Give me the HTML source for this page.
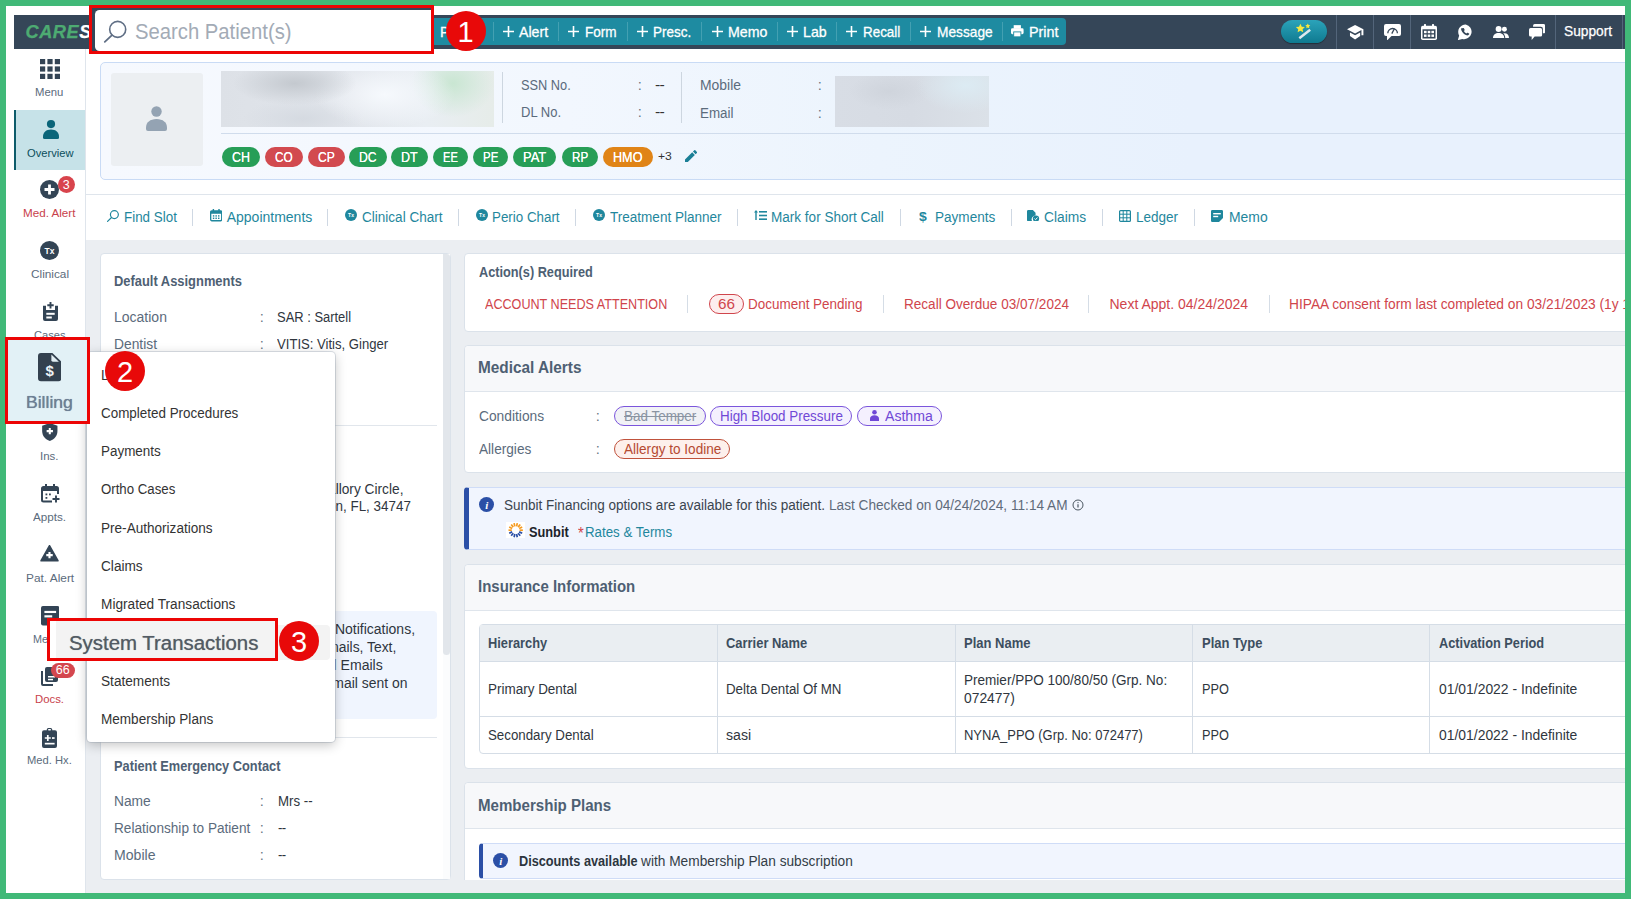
<!DOCTYPE html>
<html lang="en"><head><meta charset="utf-8"><title>CareStack - Patient Overview</title>
<style>
*{box-sizing:border-box;margin:0;padding:0}
html,body{width:1631px;height:899px;overflow:hidden;background:#41b978;font-family:"Liberation Sans",sans-serif;}
#white{position:absolute;left:6px;top:6px;width:1619px;height:887px;background:#fff;overflow:hidden}
#app{position:absolute;left:-6px;top:-6px;width:1631px;height:899px}
#ann{position:absolute;left:0;top:0;width:1631px;height:899px;overflow:hidden}
#app div,#app span,#app svg,#ann div,#ann span,#ann svg{position:absolute}
.t{white-space:nowrap;line-height:1}
.t b{position:static!important;font-weight:700}
.t span{position:static!important}
.sep{width:1px;background:#cfd8e3}
.pill{border-radius:10px;height:20px}
.panel{background:#fff;border:1px solid #dbe2ea;border-radius:4px}
.phead{background:#f7f8fa;border-bottom:1px solid #dfe5ec;border-radius:4px 4px 0 0;left:0;top:0;right:0}
.num{border-radius:50%;background:#e80909;width:40px;height:40px}
.redbox{border:3px solid #ec0505}
</style></head>
<body>
<div id="white"><div id="app">
<div style="left:14px;top:15px;width:1611px;height:34px;background:#354658"></div>
<span class="t" style="left:25.5px;top:22.7px;font-size:18.2px;font-weight:700;font-style:italic;color:#4dab72;letter-spacing:0.55px;-webkit-text-stroke:0.25px currentColor">CARE<span style="color:#fff">S</span></span>
<div style="left:380px;top:18px;width:686px;height:27px;background:#1e8ba1;border-radius:0 4px 4px 0"></div>
<div class="sep" style="left:492.5px;top:22.0px;height:19.0px;background:#43a0b2"></div>
<div class="sep" style="left:558.2px;top:22.0px;height:19.0px;background:#43a0b2"></div>
<div class="sep" style="left:626.5px;top:22.0px;height:19.0px;background:#43a0b2"></div>
<div class="sep" style="left:701.4px;top:22.0px;height:19.0px;background:#43a0b2"></div>
<div class="sep" style="left:777.3px;top:22.0px;height:19.0px;background:#43a0b2"></div>
<div class="sep" style="left:835.9px;top:22.0px;height:19.0px;background:#43a0b2"></div>
<div class="sep" style="left:909.9px;top:22.0px;height:19.0px;background:#43a0b2"></div>
<div class="sep" style="left:1002.3px;top:22.0px;height:19.0px;background:#43a0b2"></div>
<span class="t" style="left:439.5px;top:23.8px;font-size:15px;color:#fff;transform:scaleX(0.954);transform-origin:0 0;-webkit-text-stroke:0.3px #fff;">P</span>
<svg style="left:502.6px;top:25.5px" width="11" height="11" viewBox="0 0 11 11"><path d="M5.5 0V11 M0 5.5H11" stroke="#fff" stroke-width="1.6" fill="none"/></svg>
<span class="t" style="left:519.1px;top:23.8px;font-size:15px;color:#fff;transform:scaleX(0.945);transform-origin:0 0;-webkit-text-stroke:0.3px #fff;">Alert</span>
<svg style="left:568.2px;top:25.5px" width="11" height="11" viewBox="0 0 11 11"><path d="M5.5 0V11 M0 5.5H11" stroke="#fff" stroke-width="1.6" fill="none"/></svg>
<span class="t" style="left:584.7px;top:23.8px;font-size:15px;color:#fff;transform:scaleX(0.904);transform-origin:0 0;-webkit-text-stroke:0.3px #fff;">Form</span>
<svg style="left:636.5px;top:25.5px" width="11" height="11" viewBox="0 0 11 11"><path d="M5.5 0V11 M0 5.5H11" stroke="#fff" stroke-width="1.6" fill="none"/></svg>
<span class="t" style="left:652.8px;top:23.8px;font-size:15px;color:#fff;transform:scaleX(0.897);transform-origin:0 0;-webkit-text-stroke:0.3px #fff;">Presc.</span>
<svg style="left:711.6px;top:25.5px" width="11" height="11" viewBox="0 0 11 11"><path d="M5.5 0V11 M0 5.5H11" stroke="#fff" stroke-width="1.6" fill="none"/></svg>
<span class="t" style="left:727.9px;top:23.8px;font-size:15px;color:#fff;transform:scaleX(0.944);transform-origin:0 0;-webkit-text-stroke:0.3px #fff;">Memo</span>
<svg style="left:787.4px;top:25.5px" width="11" height="11" viewBox="0 0 11 11"><path d="M5.5 0V11 M0 5.5H11" stroke="#fff" stroke-width="1.6" fill="none"/></svg>
<span class="t" style="left:803.4px;top:23.8px;font-size:15px;color:#fff;transform:scaleX(0.945);transform-origin:0 0;-webkit-text-stroke:0.3px #fff;">Lab</span>
<svg style="left:845.8px;top:25.5px" width="11" height="11" viewBox="0 0 11 11"><path d="M5.5 0V11 M0 5.5H11" stroke="#fff" stroke-width="1.6" fill="none"/></svg>
<span class="t" style="left:862.9px;top:23.8px;font-size:15px;color:#fff;transform:scaleX(0.894);transform-origin:0 0;-webkit-text-stroke:0.3px #fff;">Recall</span>
<svg style="left:919.7px;top:25.5px" width="11" height="11" viewBox="0 0 11 11"><path d="M5.5 0V11 M0 5.5H11" stroke="#fff" stroke-width="1.6" fill="none"/></svg>
<span class="t" style="left:936.9px;top:23.8px;font-size:15px;color:#fff;transform:scaleX(0.914);transform-origin:0 0;-webkit-text-stroke:0.3px #fff;">Message</span>
<svg style="left:1011.300px;top:24.600px" width="12.600" height="12" viewBox="0 0 14 13"><rect x="3" y="0" width="8" height="4" fill="#fff"/><rect x="0" y="3.5" width="14" height="6.5" rx="1.5" fill="#fff"/><rect x="3" y="7.5" width="8" height="5.5" fill="#fff" stroke="#1e8ba1" stroke-width="1"/></svg>
<span class="t" style="left:1028.5px;top:23.8px;font-size:15px;color:#fff;transform:scaleX(0.955);transform-origin:0 0;-webkit-text-stroke:0.3px #fff;">Print</span>
<div class="sep" style="left:1336.0px;top:15.0px;height:34.0px;background:#53657a"></div>
<div class="sep" style="left:1373.0px;top:15.0px;height:34.0px;background:#53657a"></div>
<div class="sep" style="left:1410.0px;top:15.0px;height:34.0px;background:#53657a"></div>
<div class="sep" style="left:1555.0px;top:15.0px;height:34.0px;background:#53657a"></div>
<div class="sep" style="left:1622.0px;top:15.0px;height:34.0px;background:#53657a"></div>
<div style="left:1281px;top:20px;width:46px;height:23px;border-radius:12px;background:linear-gradient(#2ba3ba,#0f7a90);box-shadow:0 1px 1px rgba(0,0,0,.35)"></div>
<svg style="left:1295px;top:22px" width="20" height="19" viewBox="0 0 20 19"><path d="M4.300 16.300L15.200 7.800" stroke="#dfe8ee" stroke-width="2.500"/><path d="M5.400 1.800l1.400 2.900 3.100.4-2.300 2.100.6 3.100-2.800-1.500-2.800 1.500.6-3.100L.9 5.100l3.100-.4z" fill="#f7e83e"/><path d="M12.800 1.500l.8 1.600 1.700.2-1.300 1.200.3 1.700-1.500-.8-1.500.8.300-1.700-1.300-1.200 1.700-.2z" fill="#f7e83e"/></svg>
<svg style="left:1346.500px;top:24.500px" width="17" height="15" viewBox="0 0 20 17.600"><path d="M9.500 0L0 5l9.500 5 7.500-4v6h2.300V5z" fill="#fff"/><path d="M3.500 8.800v4.200L9.500 17l6-4V8.800L9.500 12z" fill="#fff"/></svg>
<svg style="left:1383.500px;top:23.700px" width="17" height="16.500" viewBox="0 0 17 16.500"><path d="M2 0h13a2 2 0 0 1 2 2v8a2 2 0 0 1-2 2H7.500L3 16.500V12H2a2 2 0 0 1-2-2V2a2 2 0 0 1 2-2z" fill="#fff"/><path d="M3.800 9.300a4.800 4.800 0 0 1 9.600 0" fill="none" stroke="#354658" stroke-width="1.300"/><path d="M7.800 9.600l2.600-4.800" stroke="#354658" stroke-width="1.300"/></svg>
<svg style="left:1421px;top:23.800px" width="16" height="16" viewBox="0 0 16 16"><rect x="0" y="1.800" width="16" height="14.200" rx="1.800" fill="#fff"/><rect x="3" y="0" width="2" height="3" rx=".5" fill="#fff"/><rect x="11" y="0" width="2" height="3" rx=".5" fill="#fff"/><rect x="1.500" y="5.300" width="13" height="9.200" fill="#354658"/><g fill="#fff"><rect x="3" y="6.800" width="2.600" height="2.400"/><rect x="6.700" y="6.800" width="2.600" height="2.400"/><rect x="10.400" y="6.800" width="2.600" height="2.400"/><rect x="3" y="10.500" width="2.600" height="2.400"/><rect x="6.700" y="10.500" width="2.600" height="2.400"/><rect x="10.400" y="10.500" width="2.600" height="2.400"/></g></svg>
<svg style="left:1456.500px;top:23.800px" width="16.600" height="16.600" viewBox="0 0 20 20"><path d="M10.500 0.500a9 9 0 0 0-7.900 13.400L1 19.500l5.300-1.500A9 9 0 1 0 10.500 .5z" fill="#fff"/><path d="M7.300 5.100c.3-.3.800-.3 1 .1l.9 1.700c.1.300 0 .6-.2.800l-.6.600c.5 1.300 1.700 2.500 3 3l.6-.6c.2-.2.600-.3.800-.2l1.700.9c.4.2.4.7.1 1l-.8.8c-.6.600-1.500.7-2.300.4-3-1.100-5.300-3.400-6.400-6.400-.3-.8-.2-1.700.4-2.300z" fill="#354658"/></svg>
<svg style="left:1493px;top:25.800px" width="16" height="12" viewBox="0 0 20 15"><circle cx="7" cy="3.700" r="3.700" fill="#fff"/><path d="M0 15c0-4.200 3-6.300 7-6.300s7 2.100 7 6.300z" fill="#fff"/><circle cx="14.300" cy="4" r="3.100" fill="#fff"/><path d="M15.300 15H20c0-3.800-2.200-5.800-5.700-5.800-.5 0-1 .05-1.400.15 1.500 1.200 2.400 3.200 2.400 5.650z" fill="#fff"/></svg>
<svg style="left:1528.800px;top:23.800px" width="16.200" height="16" viewBox="0 0 20 19.700"><path d="M7 0h11a2 2 0 0 1 2 2v7.500a2 2 0 0 1-2 2h-.8V6a2.500 2.500 0 0 0-2.500-2.500H5V2a2 2 0 0 1 2-2z" fill="#fff"/><path d="M2 5h12.200a2 2 0 0 1 2 2v6.500a2 2 0 0 1-2 2H7l-3.700 4.200V15.500H2a2 2 0 0 1-2-2V7a2 2 0 0 1 2-2z" fill="#fff"/></svg>
<span class="t" style="left:1564.3px;top:24.1px;font-size:14px;color:#fff;transform:scaleX(0.982);transform-origin:0 0;-webkit-text-stroke:0.25px #fff;">Support</span>
<div style="left:85px;top:49px;width:1px;height:844px;background:#dfe5ec"></div>
<svg style="left:39.900px;top:58.600px" width="20" height="20" viewBox="0 0 20 20" fill="#334455"><rect x="0.0" y="0.0" width="5.2" height="5.2"/><rect x="7.4" y="0.0" width="5.2" height="5.2"/><rect x="14.8" y="0.0" width="5.2" height="5.2"/><rect x="0.0" y="7.4" width="5.2" height="5.2"/><rect x="7.4" y="7.4" width="5.2" height="5.2"/><rect x="14.8" y="7.4" width="5.2" height="5.2"/><rect x="0.0" y="14.8" width="5.2" height="5.2"/><rect x="7.4" y="14.8" width="5.2" height="5.2"/><rect x="14.8" y="14.8" width="5.2" height="5.2"/></svg>
<span class="t" style="left:35.4px;top:87.0px;font-size:11px;color:#5b6b7c;transform:scaleX(1.027);transform-origin:0 0;">Menu</span>
<div style="left:14px;top:110px;width:71px;height:60px;background:#c6e2e8;border-left:2px solid #0e5c6b"></div>
<svg style="left:42.700px;top:119.700px" width="16" height="19" viewBox="0 0 16 19" fill="#0a6579"><circle cx="8" cy="4.100" r="4.100"/><path d="M0 17.500v-1c0-4.200 3.200-7 8-7s8 2.800 8 7v1a1.500 1.500 0 0 1-1.500 1.500h-13A1.500 1.500 0 0 1 0 17.500z"/></svg>
<span class="t" style="left:27.1px;top:147.8px;font-size:11px;color:#0b4f5c;transform:scaleX(1.016);transform-origin:0 0;">Overview</span>
<svg style="left:40px;top:180px" width="19" height="19" viewBox="0 0 19 19"><circle cx="9.500" cy="9.500" r="9.500" fill="#334455"/><path d="M9.500 4.500v10M4.500 9.500h10" stroke="#fff" stroke-width="2.800"/></svg>
<div style="left:58px;top:176px;width:17px;height:17px;border-radius:50%;background:#d8444c"></div>
<span class="t" style="left:62.8px;top:178.7px;font-size:12.5px;color:#fff;">3</span>
<span class="t" style="left:22.9px;top:207.9px;font-size:11px;color:#c8414b;transform:scaleX(1.059);transform-origin:0 0;">Med. Alert</span>
<svg style="left:40.300px;top:241px" width="19" height="19" viewBox="0 0 19 19"><circle cx="9.500" cy="9.500" r="9.500" fill="#334455"/><text x="9.500" y="12.500" font-size="8.500" font-weight="700" fill="#fff" text-anchor="middle" font-family="Liberation Sans, sans-serif">Tx</text></svg>
<span class="t" style="left:30.6px;top:269.1px;font-size:11px;color:#5b6b7c;transform:scaleX(1.073);transform-origin:0 0;">Clinical</span>
<svg style="left:42.500px;top:302px" width="15" height="19" viewBox="0 0 15 19"><path d="M7.500 0v6.500M4.300 3.200h6.400" stroke="#334455" stroke-width="1.900"/><path d="M0 3.800h3v4.200h9V3.800h3V17a2 2 0 0 1-2 2H2a2 2 0 0 1-2-2z" fill="#334455"/><rect x="3.300" y="10.800" width="8.400" height="2" fill="#fff"/><rect x="3.300" y="14.500" width="5.500" height="2" fill="#fff"/></svg>
<span class="t" style="left:33.9px;top:329.7px;font-size:11px;color:#5b6b7c;transform:scaleX(1.009);transform-origin:0 0;">Cases</span>
<svg style="left:42.200px;top:423.400px" width="15.600" height="18" viewBox="0 0 17 20"><path d="M8.500 0L17 3v6c0 5.500-3.600 9.500-8.500 11C3.600 18.500 0 14.500 0 9V3z" fill="#334455"/><path d="M8.500 5.500v7M5 9h7" stroke="#fff" stroke-width="2.300"/></svg>
<span class="t" style="left:40.3px;top:450.9px;font-size:11px;color:#5b6b7c;transform:scaleX(1.041);transform-origin:0 0;">Ins.</span>
<svg style="left:40.500px;top:484px" width="19" height="19" viewBox="0 0 19 19"><path d="M11 17.500H2.500A1.500 1.500 0 0 1 1 16V4.500A1.500 1.500 0 0 1 2.500 3h13A1.500 1.500 0 0 1 17 4.500V10" fill="none" stroke="#334455" stroke-width="2"/><rect x="1" y="3" width="16" height="4" fill="#334455"/><rect x="4" y="0" width="2" height="4.500" fill="#334455"/><rect x="12" y="0" width="2" height="4.500" fill="#334455"/><g fill="#334455"><rect x="4.500" y="9.500" width="1.800" height="1.800"/><rect x="8" y="9.500" width="1.800" height="1.800"/><rect x="4.500" y="13" width="1.800" height="1.800"/></g><path d="M15 11.500v7M11.500 15h7" stroke="#334455" stroke-width="1.900"/></svg>
<span class="t" style="left:33.0px;top:511.6px;font-size:11px;color:#5b6b7c;transform:scaleX(1.060);transform-origin:0 0;">Appts.</span>
<svg style="left:40.200px;top:545.300px" width="19" height="16.600" viewBox="0 0 20 18"><path d="M10 1l9 16H1z" fill="#334455" stroke="#334455" stroke-width="2" stroke-linejoin="round"/><path d="M10 7.500v7M6.500 11h7" stroke="#fff" stroke-width="2.300"/></svg>
<span class="t" style="left:25.6px;top:572.7px;font-size:11px;color:#5b6b7c;transform:scaleX(1.079);transform-origin:0 0;">Pat. Alert</span>
<svg style="left:40.500px;top:606px" width="18.500" height="19.500" viewBox="0 0 19 20"><path d="M2 0h15a2 2 0 0 1 2 2v11l-6 7H2a2 2 0 0 1-2-2V2a2 2 0 0 1 2-2z" fill="#334455"/><rect x="3.500" y="5" width="12" height="2.200" fill="#fff"/><rect x="3.500" y="9.500" width="8" height="2.200" fill="#fff"/></svg>
<span class="t" style="left:32.9px;top:634.0px;font-size:11px;color:#5b6b7c;transform:scaleX(0.981);transform-origin:0 0;">Memo</span>
<svg style="left:41px;top:667px" width="17" height="19" viewBox="0 0 17 19"><path d="M0 4h2v13h10v2H2a2 2 0 0 1-2-2z" fill="#334455"/><path d="M6 0h9a2 2 0 0 1 2 2v11a2 2 0 0 1-2 2H6a2 2 0 0 1-2-2V2a2 2 0 0 1 2-2z" fill="#334455"/><rect x="7" y="9" width="7" height="1.500" fill="#fff"/><rect x="7" y="11.800" width="5" height="1.500" fill="#fff"/></svg>
<div style="left:50.800px;top:662.500px;width:24px;height:15.500px;border-radius:8px;background:#d4464e"></div>
<span class="t" style="left:55.8px;top:664.4px;font-size:12.5px;color:#fff;">66</span>
<span class="t" style="left:35.0px;top:694.1px;font-size:11px;color:#c8414b;transform:scaleX(1.030);transform-origin:0 0;">Docs.</span>
<svg style="left:42.200px;top:728px" width="15" height="20" viewBox="0 0 15 20"><rect x="4.800" y="0" width="5.400" height="4" rx="1.500" fill="#334455"/><path d="M2 2.300h11a2 2 0 0 1 2 2V18a2 2 0 0 1-2 2H2a2 2 0 0 1-2-2V4.300a2 2 0 0 1 2-2z" fill="#334455"/><path d="M5.800 7v6M2.800 10h6" stroke="#fff" stroke-width="1.700"/><rect x="10" y="9.200" width="2.600" height="1.700" fill="#fff"/><rect x="2.800" y="14.800" width="9.800" height="1.700" fill="#fff"/><rect x="6" y="0.900" width="3" height="1.600" rx=".8" fill="#fff"/></svg>
<span class="t" style="left:27.1px;top:754.9px;font-size:11px;color:#5b6b7c;transform:scaleX(1.017);transform-origin:0 0;">Med. Hx.</span>
<div style="left:100px;top:62px;width:1560px;height:118px;border:1px solid #c9dbf5;border-radius:5px;background:linear-gradient(90deg,#f6f9fe 0,#f2f7fe 30%,#ecf4fd 50%,#e8f1fd 70%,#e8f1fd 100%)"></div>
<div style="left:111px;top:73px;width:92px;height:93px;background:#eceff2;border-radius:3px"></div>
<svg style="left:146px;top:106px" width="21" height="25" viewBox="0 0 21 25" fill="#94a3b3"><circle cx="10.500" cy="5.500" r="5.200"/><path d="M0 23v-1.500c0-5 4-8.500 10.500-8.500S21 16.500 21 21.500V23a2 2 0 0 1-2 2H2a2 2 0 0 1-2-2z"/></svg>
<div style="left:221px;top:71px;width:273px;height:56px;overflow:hidden;background:radial-gradient(ellipse 62px 22px at 27% 22%,#c4c9cf 0,rgba(196,201,207,0) 100%),radial-gradient(ellipse 70px 34px at 60% 42%,#f6f9fd 0,rgba(246,249,253,0) 100%),radial-gradient(ellipse 42px 34px at 85% 22%,#c9e6d2 0,rgba(201,230,210,0) 100%),radial-gradient(ellipse 60px 20px at 30% 85%,#d5dae1 0,rgba(213,218,225,0) 100%),linear-gradient(90deg,#dde1e7 0,#e2e6ec 50%,#e9eef3 75%,#e6ece9 100%)"></div>
<div style="left:221px;top:133px;width:1410px;height:1px;background:#d0dcec"></div>
<div class="sep" style="left:502.0px;top:72.0px;height:51.0px;background:#cdd6e0"></div>
<div class="sep" style="left:681.0px;top:72.0px;height:51.0px;background:#cdd6e0"></div>
<span class="t" style="left:520.9px;top:78.3px;font-size:14px;color:#5b6b7c;transform:scaleX(0.914);transform-origin:0 0;">SSN No.</span>
<span class="t" style="left:638.0px;top:78.3px;font-size:14px;color:#5b6b7c;transform:scaleX(0.930);transform-origin:0 0;">:</span>
<span class="t" style="left:654.8px;top:78.3px;font-size:14px;color:#333;transform:scaleX(1.130);transform-origin:0 0;letter-spacing:-0.6px;">--</span>
<span class="t" style="left:520.9px;top:105.3px;font-size:14px;color:#5b6b7c;transform:scaleX(0.931);transform-origin:0 0;">DL No.</span>
<span class="t" style="left:638.0px;top:105.3px;font-size:14px;color:#5b6b7c;transform:scaleX(0.930);transform-origin:0 0;">:</span>
<span class="t" style="left:654.8px;top:105.3px;font-size:14px;color:#333;transform:scaleX(1.130);transform-origin:0 0;letter-spacing:-0.6px;">--</span>
<span class="t" style="left:700.4px;top:78.3px;font-size:14px;color:#5b6b7c;transform:scaleX(0.993);transform-origin:0 0;">Mobile</span>
<span class="t" style="left:817.5px;top:78.3px;font-size:14px;color:#5b6b7c;transform:scaleX(0.930);transform-origin:0 0;">:</span>
<span class="t" style="left:700.4px;top:105.9px;font-size:14px;color:#5b6b7c;transform:scaleX(0.956);transform-origin:0 0;">Email</span>
<span class="t" style="left:817.5px;top:105.8px;font-size:14px;color:#5b6b7c;transform:scaleX(0.930);transform-origin:0 0;">:</span>
<div style="left:835px;top:76px;width:154px;height:51px;background:radial-gradient(ellipse 50px 28px at 85% 18%,#dcebf3 0,rgba(220,235,243,0) 100%),radial-gradient(ellipse 40px 18px at 35% 30%,#cfd4dc 0,rgba(207,212,220,0) 100%),linear-gradient(90deg,#d8dde5 0,#d6dbe3 50%,#dbe1e8 100%)"></div>
<div class="pill" style="left:221.8px;top:147px;width:38.0px;background:#279e57"></div>
<span class="t" style="left:231.8px;top:150.1px;font-size:14px;color:#fff;transform:scaleX(0.889);transform-origin:0 0;text-shadow:0 0 0.4px #fff;">CH</span>
<div class="pill" style="left:265.0px;top:147px;width:37.7px;background:#d24a4f"></div>
<span class="t" style="left:275.0px;top:150.1px;font-size:14px;color:#fff;transform:scaleX(0.842);transform-origin:0 0;text-shadow:0 0 0.4px #fff;">CO</span>
<div class="pill" style="left:308.0px;top:147px;width:36.9px;background:#d24a4f"></div>
<span class="t" style="left:318.0px;top:150.1px;font-size:14px;color:#fff;transform:scaleX(0.868);transform-origin:0 0;text-shadow:0 0 0.4px #fff;">CP</span>
<div class="pill" style="left:349.0px;top:147px;width:37.6px;background:#279e57"></div>
<span class="t" style="left:359.0px;top:150.1px;font-size:14px;color:#fff;transform:scaleX(0.869);transform-origin:0 0;text-shadow:0 0 0.4px #fff;">DC</span>
<div class="pill" style="left:391.0px;top:147px;width:36.7px;background:#279e57"></div>
<span class="t" style="left:401.0px;top:150.1px;font-size:14px;color:#fff;transform:scaleX(0.893);transform-origin:0 0;text-shadow:0 0 0.4px #fff;">DT</span>
<div class="pill" style="left:433.0px;top:147px;width:34.8px;background:#279e57"></div>
<span class="t" style="left:443.0px;top:150.1px;font-size:14px;color:#fff;transform:scaleX(0.791);transform-origin:0 0;text-shadow:0 0 0.4px #fff;">EE</span>
<div class="pill" style="left:473.1px;top:147px;width:35.3px;background:#279e57"></div>
<span class="t" style="left:483.1px;top:150.1px;font-size:14px;color:#fff;transform:scaleX(0.818);transform-origin:0 0;text-shadow:0 0 0.4px #fff;">PE</span>
<div class="pill" style="left:513.1px;top:147px;width:43.3px;background:#279e57"></div>
<span class="t" style="left:523.1px;top:150.1px;font-size:14px;color:#fff;transform:scaleX(0.925);transform-origin:0 0;text-shadow:0 0 0.4px #fff;">PAT</span>
<div class="pill" style="left:561.5px;top:147px;width:36.2px;background:#279e57"></div>
<span class="t" style="left:571.5px;top:150.1px;font-size:14px;color:#fff;transform:scaleX(0.832);transform-origin:0 0;text-shadow:0 0 0.4px #fff;">RP</span>
<div class="pill" style="left:603.3px;top:147px;width:49.5px;background:#e08417"></div>
<span class="t" style="left:613.3px;top:150.1px;font-size:14px;color:#fff;transform:scaleX(0.902);transform-origin:0 0;text-shadow:0 0 0.4px #fff;">HMO</span>
<span class="t" style="left:658.2px;top:151.3px;font-size:11.5px;color:#333;transform:scaleX(1.052);transform-origin:0 0;">+3</span>
<svg style="left:684.500px;top:150px" width="12.200" height="12.200" viewBox="0 0 13 13" fill="#1a7f96"><path d="M0 10.200V13h2.800l7.700-7.700-2.800-2.800zM12.700 3.100a.8.800 0 0 0 0-1.100L11 .3a.8.800 0 0 0-1.100 0L8.500 1.700l2.800 2.800z"/></svg>
<div style="left:86px;top:194px;width:1545px;height:1px;background:#dfe5ec"></div>
<div style="left:86px;top:240px;width:1545px;height:660px;background:#ebeef2"></div>
<svg style="left:107.3px;top:210.0px" width="12" height="12" viewBox="0 0 13 13"><circle cx="8" cy="5" r="4.300" fill="none" stroke="#1f879d" stroke-width="1.3"/><path d="M4.900 8.100L0.600 12.400" stroke="#1f879d" stroke-width="1.3" stroke-linecap="round"/></svg>
<span class="t" style="left:124.2px;top:209.7px;font-size:14px;color:#1f879d;transform:scaleX(0.957);transform-origin:0 0;">Find Slot</span>
<div class="sep" style="left:192.4px;top:208.5px;height:17.5px;background:#cfd8e3"></div>
<div class="sep" style="left:327.4px;top:208.5px;height:17.5px;background:#cfd8e3"></div>
<div class="sep" style="left:458.2px;top:208.5px;height:17.5px;background:#cfd8e3"></div>
<div class="sep" style="left:575.4px;top:208.5px;height:17.5px;background:#cfd8e3"></div>
<div class="sep" style="left:737.2px;top:208.5px;height:17.5px;background:#cfd8e3"></div>
<div class="sep" style="left:900.3px;top:208.5px;height:17.5px;background:#cfd8e3"></div>
<div class="sep" style="left:1010.5px;top:208.5px;height:17.5px;background:#cfd8e3"></div>
<div class="sep" style="left:1102.4px;top:208.5px;height:17.5px;background:#cfd8e3"></div>
<div class="sep" style="left:1194.3px;top:208.5px;height:17.5px;background:#cfd8e3"></div>
<svg style="left:209.800px;top:209.200px" width="12.400" height="12.400" viewBox="0 0 13 13"><rect x=".7" y="2" width="11.600" height="10.300" rx="1.200" fill="none" stroke="#1f879d" stroke-width="1.400"/><rect x=".7" y="2" width="11.600" height="3" fill="#1f879d"/><rect x="2.800" y="0" width="1.500" height="3" fill="#1f879d"/><rect x="8.700" y="0" width="1.500" height="3" fill="#1f879d"/><g fill="#1f879d"><rect x="3" y="6.500" width="1.500" height="1.500"/><rect x="5.700" y="6.500" width="1.500" height="1.500"/><rect x="8.400" y="6.500" width="1.500" height="1.500"/><rect x="3" y="9" width="1.500" height="1.500"/><rect x="5.700" y="9" width="1.500" height="1.500"/><rect x="8.400" y="9" width="1.500" height="1.500"/></g></svg>
<span class="t" style="left:226.7px;top:209.7px;font-size:14px;color:#1f879d;">Appointments</span>
<svg style="left:345.0px;top:209.4px" width="12" height="12" viewBox="0 0 12 12"><circle cx="6" cy="6" r="6" fill="#1f879d"/><text x="6" y="7.800" font-size="5" font-weight="700" fill="#fff" text-anchor="middle" font-family="Liberation Sans, sans-serif">Tx</text></svg>
<span class="t" style="left:361.7px;top:209.7px;font-size:14px;color:#1f879d;transform:scaleX(0.967);transform-origin:0 0;">Clinical Chart</span>
<svg style="left:475.5px;top:209.4px" width="12" height="12" viewBox="0 0 12 12"><circle cx="6" cy="6" r="6" fill="#1f879d"/><text x="6" y="7.800" font-size="5" font-weight="700" fill="#fff" text-anchor="middle" font-family="Liberation Sans, sans-serif">Tx</text></svg>
<span class="t" style="left:492.2px;top:209.7px;font-size:14px;color:#1f879d;transform:scaleX(0.954);transform-origin:0 0;">Perio Chart</span>
<svg style="left:593.0px;top:209.4px" width="12" height="12" viewBox="0 0 12 12"><circle cx="6" cy="6" r="6" fill="#1f879d"/><text x="6" y="7.800" font-size="5" font-weight="700" fill="#fff" text-anchor="middle" font-family="Liberation Sans, sans-serif">Tx</text></svg>
<span class="t" style="left:609.8px;top:209.7px;font-size:14px;color:#1f879d;transform:scaleX(0.967);transform-origin:0 0;">Treatment Planner</span>
<svg style="left:754px;top:210.200px" width="13" height="11" viewBox="0 0 13 11" fill="#1f879d"><path d="M2 0l2 2.500H2.700V10H1.300V2.500H0z"/><rect x="5" y="1" width="8" height="1.600"/><rect x="5" y="4.700" width="8" height="1.600"/><rect x="5" y="8.400" width="8" height="1.600"/></svg>
<span class="t" style="left:771.4px;top:209.7px;font-size:14px;color:#1f879d;transform:scaleX(0.967);transform-origin:0 0;">Mark for Short Call</span>
<span class="t" style="left:919.4px;top:209.8px;font-size:13px;color:#1f879d;font-weight:700;transform:scaleX(1.080);transform-origin:0 0;">$</span>
<span class="t" style="left:934.7px;top:209.7px;font-size:14px;color:#1f879d;transform:scaleX(0.968);transform-origin:0 0;">Payments</span>
<svg style="left:1027.300px;top:209.600px" width="12.600" height="11.700" viewBox="0 0 14 13"><path d="M1.500 0h5l3 3v3.200a4.200 4.200 0 0 0-3.800 6.300H1.500A1.500 1.500 0 0 1 0 11V1.500A1.500 1.500 0 0 1 1.500 0z" fill="#1f879d"/><circle cx="10" cy="9.500" r="3.500" fill="#1f879d"/><path d="M8.300 9.500l1.200 1.200 2.200-2.200" stroke="#fff" stroke-width="1.100" fill="none"/></svg>
<span class="t" style="left:1044.2px;top:209.7px;font-size:14px;color:#1f879d;transform:scaleX(0.984);transform-origin:0 0;">Claims</span>
<svg style="left:1119px;top:209.600px" width="12" height="12" viewBox="0 0 12 12"><rect x=".6" y=".6" width="10.800" height="10.800" rx="1" fill="none" stroke="#1f879d" stroke-width="1.200"/><path d="M.6 4.200h10.800M.6 7.800h10.800M4.200 .6v10.800M7.800 .6v10.800" stroke="#1f879d" stroke-width="1"/></svg>
<span class="t" style="left:1136.1px;top:209.7px;font-size:14px;color:#1f879d;transform:scaleX(0.965);transform-origin:0 0;">Ledger</span>
<svg style="left:1211px;top:209.600px" width="12" height="12" viewBox="0 0 12 12"><path d="M1.300 0h9.400A1.300 1.300 0 0 1 12 1.300V8l-4 4H1.300A1.300 1.300 0 0 1 0 10.700V1.300A1.300 1.300 0 0 1 1.300 0z" fill="#1f879d"/><rect x="2.200" y="3" width="7.600" height="1.400" fill="#fff"/><rect x="2.200" y="5.800" width="5" height="1.400" fill="#fff"/></svg>
<span class="t" style="left:1228.6px;top:209.7px;font-size:14px;color:#1f879d;transform:scaleX(0.994);transform-origin:0 0;">Memo</span>
<div class="panel" style="left:100px;top:253px;width:350.500px;height:627px"></div>
<div style="left:443px;top:254px;width:7px;height:625px;background:#fbfcfd"></div>
<div style="left:443px;top:254px;width:7px;height:400.500px;background:#e2e6eb;border-radius:0 3px 3.500px 3.500px"></div>
<span class="t" style="left:114.0px;top:274.4px;font-size:14px;color:#4e6073;font-weight:700;transform:scaleX(0.922);transform-origin:0 0;">Default Assignments</span>
<span class="t" style="left:114.0px;top:310.2px;font-size:14px;color:#5b6b7c;">Location</span>
<span class="t" style="left:260.0px;top:310.2px;font-size:14px;color:#5b6b7c;transform:scaleX(0.930);transform-origin:0 0;">:</span>
<span class="t" style="left:277.2px;top:310.2px;font-size:14px;color:#2f363e;transform:scaleX(0.924);transform-origin:0 0;">SAR : Sartell</span>
<span class="t" style="left:114.0px;top:337.0px;font-size:14px;color:#5b6b7c;transform:scaleX(0.986);transform-origin:0 0;">Dentist</span>
<span class="t" style="left:260.0px;top:337.0px;font-size:14px;color:#5b6b7c;transform:scaleX(0.930);transform-origin:0 0;">:</span>
<span class="t" style="left:277.2px;top:337.0px;font-size:14px;color:#2f363e;transform:scaleX(0.936);transform-origin:0 0;">VITIS: Vitis, Ginger</span>
<div style="left:114.500px;top:425px;width:322px;height:1px;background:#e1e6ec"></div>
<span class="t" style="right:1303.1px;top:481.9px;font-size:14px;color:#2f363e;transform:scaleX(0.930);transform-origin:100% 0;">1234 M</span>
<span class="t" style="left:328.4px;top:481.9px;font-size:14px;color:#2f363e;transform:scaleX(0.980);transform-origin:0 0;">allory Circle,</span>
<span class="t" style="right:1303.3px;top:499.4px;font-size:14px;color:#2f363e;transform:scaleX(0.930);transform-origin:100% 0;">Celebrati</span>
<span class="t" style="left:327.9px;top:499.4px;font-size:14px;color:#2f363e;transform:scaleX(0.960);transform-origin:0 0;">on, FL, 34747</span>
<div style="left:114.500px;top:611px;width:322.500px;height:107.500px;background:#f0f5fe;border-radius:4px"></div>
<span class="t" style="right:1300.0px;top:622.1px;font-size:14px;color:#2f363e;transform:scaleX(0.930);transform-origin:100% 0;">Patient opted for</span>
<span class="t" style="left:334.9px;top:622.1px;font-size:14px;color:#2f363e;">Notifications,</span>
<span class="t" style="left:318.1px;top:640.1px;font-size:14px;color:#2f363e;transform:scaleX(0.990);transform-origin:0 0;">Emails, Text,</span>
<span class="t" style="left:321.3px;top:658.1px;font-size:14px;color:#2f363e;transform:scaleX(1.005);transform-origin:0 0;">All Emails</span>
<span class="t" style="left:323.2px;top:676.1px;font-size:14px;color:#2f363e;transform:scaleX(0.995);transform-origin:0 0;">Email sent on</span>
<div style="left:114.500px;top:737px;width:322px;height:1px;background:#e1e6ec"></div>
<span class="t" style="left:114.1px;top:758.5px;font-size:14px;color:#4e6073;font-weight:700;transform:scaleX(0.914);transform-origin:0 0;">Patient Emergency Contact</span>
<span class="t" style="left:114.0px;top:793.7px;font-size:14px;color:#5b6b7c;transform:scaleX(0.984);transform-origin:0 0;">Name</span>
<span class="t" style="left:260.0px;top:793.7px;font-size:14px;color:#5b6b7c;transform:scaleX(0.930);transform-origin:0 0;">:</span>
<span class="t" style="left:277.5px;top:793.7px;font-size:14px;color:#2f363e;transform:scaleX(0.946);transform-origin:0 0;">Mrs --</span>
<span class="t" style="left:114.0px;top:820.9px;font-size:14px;color:#5b6b7c;transform:scaleX(0.973);transform-origin:0 0;">Relationship to Patient</span>
<span class="t" style="left:260.0px;top:820.9px;font-size:14px;color:#5b6b7c;transform:scaleX(0.930);transform-origin:0 0;">:</span>
<span class="t" style="left:277.5px;top:820.9px;font-size:14px;color:#2f363e;transform:scaleX(0.933);transform-origin:0 0;letter-spacing:-0.6px;">--</span>
<span class="t" style="left:114.0px;top:847.7px;font-size:14px;color:#5b6b7c;transform:scaleX(1.006);transform-origin:0 0;">Mobile</span>
<span class="t" style="left:260.0px;top:847.7px;font-size:14px;color:#5b6b7c;transform:scaleX(0.930);transform-origin:0 0;">:</span>
<span class="t" style="left:277.5px;top:847.7px;font-size:14px;color:#2f363e;transform:scaleX(0.933);transform-origin:0 0;letter-spacing:-0.6px;">--</span>
<div class="panel" style="left:464px;top:253px;width:1200px;height:78.500px"></div>
<span class="t" style="left:478.5px;top:265.1px;font-size:14px;color:#4e6073;font-weight:700;transform:scaleX(0.909);transform-origin:0 0;">Action(s) Required</span>
<span class="t" style="left:485.3px;top:296.9px;font-size:14px;color:#d0454c;transform:scaleX(0.900);transform-origin:0 0;">ACCOUNT NEEDS ATTENTION</span>
<div class="sep" style="left:687.3px;top:295.0px;height:17.5px;background:#d5dde6"></div>
<div class="sep" style="left:883.4px;top:295.0px;height:17.5px;background:#d5dde6"></div>
<div class="sep" style="left:1088.2px;top:295.0px;height:17.5px;background:#d5dde6"></div>
<div class="sep" style="left:1268.8px;top:295.0px;height:17.5px;background:#d5dde6"></div>
<div style="left:709px;top:294px;width:34.700px;height:20px;border:1px solid #d0454c;border-radius:10px;background:#fdeeee"></div>
<span class="t" style="left:718.0px;top:296.9px;font-size:14px;color:#d0454c;transform:scaleX(1.090);transform-origin:0 0;">66</span>
<span class="t" style="left:748.1px;top:296.9px;font-size:14px;color:#d0454c;transform:scaleX(0.962);transform-origin:0 0;">Document Pending</span>
<span class="t" style="left:903.5px;top:296.9px;font-size:14px;color:#d0454c;transform:scaleX(0.968);transform-origin:0 0;">Recall Overdue 03/07/2024</span>
<span class="t" style="left:1109.5px;top:296.9px;font-size:14px;color:#d0454c;">Next Appt. 04/24/2024</span>
<span class="t" style="left:1288.9px;top:296.9px;font-size:14px;color:#d0454c;transform:scaleX(0.981);transform-origin:0 0;">HIPAA consent form last completed on 03/21/2023 (1y 1m ago)</span>
<div class="panel" style="left:464px;top:345px;width:1200px;height:128px"><div class="phead" style="height:46px"></div></div>
<span class="t" style="left:478.4px;top:360.1px;font-size:16px;color:#4e6073;font-weight:700;transform:scaleX(0.959);transform-origin:0 0;">Medical Alerts</span>
<span class="t" style="left:478.5px;top:409.1px;font-size:14px;color:#5b6b7c;transform:scaleX(0.984);transform-origin:0 0;">Conditions</span>
<span class="t" style="left:596.2px;top:409.1px;font-size:14px;color:#5b6b7c;transform:scaleX(0.930);transform-origin:0 0;">:</span>
<span class="t" style="left:478.5px;top:442.1px;font-size:14px;color:#5b6b7c;transform:scaleX(0.974);transform-origin:0 0;">Allergies</span>
<span class="t" style="left:596.2px;top:442.1px;font-size:14px;color:#5b6b7c;transform:scaleX(0.930);transform-origin:0 0;">:</span>
<div style="left:614px;top:406px;width:92px;height:20px;border:1px solid #7b55dc;border-radius:10px;background:#f1f2f6"></div>
<span class="t" style="left:623.5px;top:409.1px;font-size:14px;color:#8a94a2;transform:scaleX(0.961);transform-origin:0 0;text-decoration:line-through;">Bad Temper</span>
<div style="left:709.800px;top:406px;width:142.500px;height:20px;border:1px solid #7b55dc;border-radius:10px;background:#f4f0fe"></div>
<span class="t" style="left:719.8px;top:409.1px;font-size:14px;color:#7048d6;transform:scaleX(0.957);transform-origin:0 0;">High Blood Pressure</span>
<div style="left:857.200px;top:406px;width:85px;height:20px;border:1px solid #7b55dc;border-radius:10px;background:#f4f0fe"></div>
<svg style="left:869.500px;top:410px" width="9" height="11" viewBox="0 0 9 11" fill="#7048d6"><circle cx="4.500" cy="2.300" r="2.300"/><path d="M0 11V8.500C0 6.500 1.800 5.200 4.500 5.200S9 6.500 9 8.500V11z"/></svg>
<span class="t" style="left:884.7px;top:409.1px;font-size:14px;color:#7048d6;transform:scaleX(1.007);transform-origin:0 0;">Asthma</span>
<div style="left:614px;top:439.200px;width:116px;height:20px;border:1px solid #c0523c;border-radius:10px;background:#fdf0ec"></div>
<span class="t" style="left:623.5px;top:442.1px;font-size:14px;color:#b54a31;transform:scaleX(0.969);transform-origin:0 0;">Allergy to Iodine</span>
<div style="left:464px;top:487px;width:1200px;height:63px;background:#f1f5fe;border:1px solid #cfdcf7;border-left:5px solid #2b4fa6;border-radius:4px 0 0 4px"></div>
<svg style="left:478.9px;top:497.4px" width="15" height="15" viewBox="0 0 15 15"><circle cx="7.500" cy="7.500" r="7.500" fill="#2b4fa6"/><text x="7.700" y="11.600" font-size="11" font-weight="700" font-style="italic" fill="#fff" text-anchor="middle" font-family="Liberation Serif, serif">i</text></svg>
<span class="t" style="left:504.0px;top:497.8px;font-size:14px;color:#3a444e;transform:scaleX(0.966);transform-origin:0 0;">Sunbit Financing options are available for this patient.</span>
<span class="t" style="left:828.8px;top:497.8px;font-size:14px;color:#5f6b7a;transform:scaleX(0.974);transform-origin:0 0;">Last Checked on 04/24/2024, 11:14 AM</span>
<svg style="left:1071.500px;top:498.500px" width="12" height="12" viewBox="0 0 12 12"><circle cx="6" cy="6" r="5" fill="none" stroke="#4a5560" stroke-width="1"/><path d="M6 5.300v3.200" stroke="#4a5560" stroke-width="1.200"/><circle cx="6" cy="3.600" r=".7" fill="#4a5560"/></svg>
<svg style="left:505.500px;top:522px" width="19.400" height="16.400" viewBox="0 0 19.400 16.400"><rect width="19.400" height="16.400" fill="#fff"/><path d="M10.57 4.40L11.30 1.18" stroke="#f59a1f" stroke-width="1.700"/><path d="M12.13 5.15L14.19 2.57" stroke="#f59a1f" stroke-width="1.700"/><path d="M13.21 6.51L16.19 5.08" stroke="#f59a1f" stroke-width="1.700"/><path d="M13.60 8.20L16.90 8.20" stroke="#f59a1f" stroke-width="1.700"/><path d="M13.21 9.89L16.19 11.32" stroke="#2b4fa6" stroke-width="1.700"/><path d="M12.13 11.25L14.19 13.83" stroke="#2b4fa6" stroke-width="1.700"/><path d="M10.57 12.00L11.30 15.22" stroke="#2b4fa6" stroke-width="1.700"/><path d="M8.83 12.00L8.10 15.22" stroke="#2b4fa6" stroke-width="1.700"/><path d="M7.27 11.25L5.21 13.83" stroke="#2b4fa6" stroke-width="1.700"/><path d="M6.19 9.89L3.21 11.32" stroke="#2b4fa6" stroke-width="1.700"/><path d="M5.80 8.20L2.50 8.20" stroke="#f59a1f" stroke-width="1.700"/><path d="M6.19 6.51L3.21 5.08" stroke="#f59a1f" stroke-width="1.700"/><path d="M7.27 5.15L5.21 2.57" stroke="#f59a1f" stroke-width="1.700"/><path d="M8.83 4.40L8.10 1.18" stroke="#f59a1f" stroke-width="1.700"/></svg>
<span class="t" style="left:529.3px;top:524.6px;font-size:14px;color:#1d232a;font-weight:700;transform:scaleX(0.911);transform-origin:0 0;">Sunbit</span>
<span class="t" style="left:578.2px;top:526.0px;font-size:16px;color:#d0454c;transform:scaleX(0.930);transform-origin:0 0;">*</span>
<span class="t" style="left:584.5px;top:524.6px;font-size:14px;color:#1f879d;transform:scaleX(0.951);transform-origin:0 0;">Rates &amp; Terms</span>
<div class="panel" style="left:464px;top:564px;width:1200px;height:204.500px"><div class="phead" style="height:46px"></div></div>
<span class="t" style="left:478.4px;top:579.3px;font-size:16px;color:#4e6073;font-weight:700;transform:scaleX(0.936);transform-origin:0 0;">Insurance Information</span>
<div style="left:479px;top:624px;width:1200px;height:129.500px;border:1px solid #d5dde6;border-radius:4px 0 0 4px;background:#fff"></div>
<div style="left:480px;top:625px;width:1200px;height:36.500px;background:#eaeef2;border-bottom:1px solid #d5dde6"></div>
<div style="left:480px;top:716px;width:1200px;height:1px;background:#d5dde6"></div>
<div class="sep" style="left:717.0px;top:625.0px;height:128.0px;background:#d5dde6"></div>
<div class="sep" style="left:954.5px;top:625.0px;height:128.0px;background:#d5dde6"></div>
<div class="sep" style="left:1192.0px;top:625.0px;height:128.0px;background:#d5dde6"></div>
<div class="sep" style="left:1429.0px;top:625.0px;height:128.0px;background:#d5dde6"></div>
<span class="t" style="left:488.3px;top:635.9px;font-size:14px;color:#3d4e5f;font-weight:700;transform:scaleX(0.916);transform-origin:0 0;">Hierarchy</span>
<span class="t" style="left:726.2px;top:635.9px;font-size:14px;color:#3d4e5f;font-weight:700;transform:scaleX(0.924);transform-origin:0 0;">Carrier Name</span>
<span class="t" style="left:964.1px;top:635.9px;font-size:14px;color:#3d4e5f;font-weight:700;transform:scaleX(0.930);transform-origin:0 0;">Plan Name</span>
<span class="t" style="left:1201.5px;top:635.9px;font-size:14px;color:#3d4e5f;font-weight:700;transform:scaleX(0.928);transform-origin:0 0;">Plan Type</span>
<span class="t" style="left:1439.1px;top:635.9px;font-size:14px;color:#3d4e5f;font-weight:700;transform:scaleX(0.913);transform-origin:0 0;">Activation Period</span>
<span class="t" style="left:488.3px;top:682.1px;font-size:14px;color:#2f363e;transform:scaleX(0.962);transform-origin:0 0;">Primary Dental</span>
<span class="t" style="left:726.2px;top:682.1px;font-size:14px;color:#2f363e;transform:scaleX(0.951);transform-origin:0 0;">Delta Dental Of MN</span>
<span class="t" style="left:964.1px;top:673.1px;font-size:14px;color:#2f363e;transform:scaleX(0.967);transform-origin:0 0;">Premier/PPO 100/80/50 (Grp. No:</span>
<span class="t" style="left:964.1px;top:691.0px;font-size:14px;color:#2f363e;transform:scaleX(0.990);transform-origin:0 0;">072477)</span>
<span class="t" style="left:1201.5px;top:682.1px;font-size:14px;color:#2f363e;transform:scaleX(0.912);transform-origin:0 0;">PPO</span>
<span class="t" style="left:1439.1px;top:682.1px;font-size:14px;color:#2f363e;transform:scaleX(0.993);transform-origin:0 0;">01/01/2022 - Indefinite</span>
<span class="t" style="left:488.3px;top:727.9px;font-size:14px;color:#2f363e;transform:scaleX(0.950);transform-origin:0 0;">Secondary Dental</span>
<span class="t" style="left:726.2px;top:727.9px;font-size:14px;color:#2f363e;transform:scaleX(1.007);transform-origin:0 0;">sasi</span>
<span class="t" style="left:964.1px;top:727.9px;font-size:14px;color:#2f363e;transform:scaleX(0.927);transform-origin:0 0;">NYNA_PPO (Grp. No: 072477)</span>
<span class="t" style="left:1201.5px;top:727.9px;font-size:14px;color:#2f363e;transform:scaleX(0.912);transform-origin:0 0;">PPO</span>
<span class="t" style="left:1439.1px;top:727.9px;font-size:14px;color:#2f363e;transform:scaleX(0.993);transform-origin:0 0;">01/01/2022 - Indefinite</span>
<div class="panel" style="left:464px;top:782px;width:1200px;height:140px"><div class="phead" style="height:46px"></div></div>
<span class="t" style="left:478.4px;top:798.2px;font-size:16px;color:#4e6073;font-weight:700;transform:scaleX(0.942);transform-origin:0 0;">Membership Plans</span>
<div style="left:479px;top:843px;width:1200px;height:36px;background:#f1f5fe;border:1px solid #cfdcf7;border-left:4px solid #2b4fa6;border-radius:4px 0 0 4px"></div>
<svg style="left:493.3px;top:853.4px" width="15" height="15" viewBox="0 0 15 15"><circle cx="7.500" cy="7.500" r="7.500" fill="#2b4fa6"/><text x="7.700" y="11.600" font-size="11" font-weight="700" font-style="italic" fill="#fff" text-anchor="middle" font-family="Liberation Serif, serif">i</text></svg>
<span class="t" style="left:518.6px;top:854.0px;font-size:14px;color:#2c353e;font-weight:700;transform:scaleX(0.907);transform-origin:0 0;">Discounts available</span>
<span class="t" style="left:640.5px;top:854.0px;font-size:14px;color:#333d47;transform:scaleX(0.979);transform-origin:0 0;">with Membership Plan subscription</span>
<div style="left:86px;top:880px;width:1545px;height:20px;background:#ebeef2"></div>
<div style="left:87px;top:352px;width:248px;height:389.500px;background:#fff;border-radius:4px;box-shadow:0 3px 12px rgba(0,0,0,.24),0 0 0 1px rgba(190,200,212,.5)"></div>
<div style="left:92px;top:625px;width:237.700px;height:35.300px;background:#f3f3f3;border-radius:4px"></div>
<span class="t" style="left:100.8px;top:367.7px;font-size:14px;color:#333;transform:scaleX(0.979);transform-origin:0 0;">Ledger</span>
<span class="t" style="left:100.8px;top:405.8px;font-size:14px;color:#333;transform:scaleX(0.959);transform-origin:0 0;">Completed Procedures</span>
<span class="t" style="left:100.8px;top:443.9px;font-size:14px;color:#333;transform:scaleX(0.960);transform-origin:0 0;">Payments</span>
<span class="t" style="left:100.8px;top:482.4px;font-size:14px;color:#333;transform:scaleX(0.945);transform-origin:0 0;">Ortho Cases</span>
<span class="t" style="left:100.8px;top:520.7px;font-size:14px;color:#333;transform:scaleX(0.969);transform-origin:0 0;">Pre-Authorizations</span>
<span class="t" style="left:100.8px;top:559.0px;font-size:14px;color:#333;transform:scaleX(0.974);transform-origin:0 0;">Claims</span>
<span class="t" style="left:100.8px;top:597.0px;font-size:14px;color:#333;transform:scaleX(0.976);transform-origin:0 0;">Migrated Transactions</span>
<span class="t" style="left:100.8px;top:673.7px;font-size:14px;color:#333;transform:scaleX(0.975);transform-origin:0 0;">Statements</span>
<span class="t" style="left:100.8px;top:712.4px;font-size:14px;color:#333;transform:scaleX(0.968);transform-origin:0 0;">Membership Plans</span>

</div></div>
<div id="ann">

<div class="redbox" style="left:89px;top:5px;width:345px;height:48.700px;background:#354658"></div>
<div style="left:94.700px;top:10.300px;width:336.300px;height:40.500px;background:#fff;border-radius:4.500px 0 0 4.500px"></div>
<svg style="left:103px;top:20px" width="25" height="24" viewBox="0 0 25 24"><circle cx="14.700" cy="9.400" r="8" fill="none" stroke="#5f6e84" stroke-width="1.600"/><path d="M9 15.200L1.800 21.800" stroke="#5f6e84" stroke-width="1.800" stroke-linecap="round"/></svg>
<span class="t" style="left:135.2px;top:20.7px;font-size:22px;color:#a3abb6;transform:scaleX(0.921);transform-origin:0 0;">Search Patient(s)</span>
<div class="num" style="left:446px;top:10.800px"></div>
<span class="t" style="left:457.4px;top:17.5px;font-size:29px;color:#fff;">1</span>
<div class="redbox" style="left:5px;top:337px;width:85px;height:86.700px;background:#e2f1f6"></div>
<svg style="left:37.800px;top:353.400px" width="23.400" height="28.300" viewBox="0 0 23.400 28.300"><path d="M3 0h11.400l9 8.500V25.300a3 3 0 0 1-3 3H3a3 3 0 0 1-3-3V3a3 3 0 0 1 3-3z" fill="#33414f"/><path d="M13.400 1.500l7.500 7.300h-6a1.500 1.500 0 0 1-1.500-1.500z" fill="#e2eef3"/><text x="11.700" y="23" font-size="15" font-weight="700" fill="#eef3f6" text-anchor="middle" font-family="Liberation Sans, sans-serif">$</text></svg>
<span class="t" style="left:25.5px;top:394.0px;font-size:17px;color:#6d7f94;transform:scaleX(1.032);transform-origin:0 0;text-shadow:0 0 0.7px #6d7f94;">Billing</span>
<div class="num" style="left:105px;top:350.700px"></div>
<span class="t" style="left:116.9px;top:357.7px;font-size:29px;color:#fff;">2</span>
<div class="redbox" style="left:47px;top:617.900px;width:231.200px;height:42.800px;background:linear-gradient(90deg,#fff 0,#fff 6px,#f3f3f3 6px)"></div>
<span class="t" style="left:68.7px;top:632.8px;font-size:20px;color:#535b64;transform:scaleX(1.020);transform-origin:0 0;text-shadow:0 0 0.7px #7a828a;">System Transactions</span>
<div class="num" style="left:279.100px;top:620.700px"></div>
<span class="t" style="left:290.9px;top:627.9px;font-size:29px;color:#fff;">3</span>
</div>
</body></html>
